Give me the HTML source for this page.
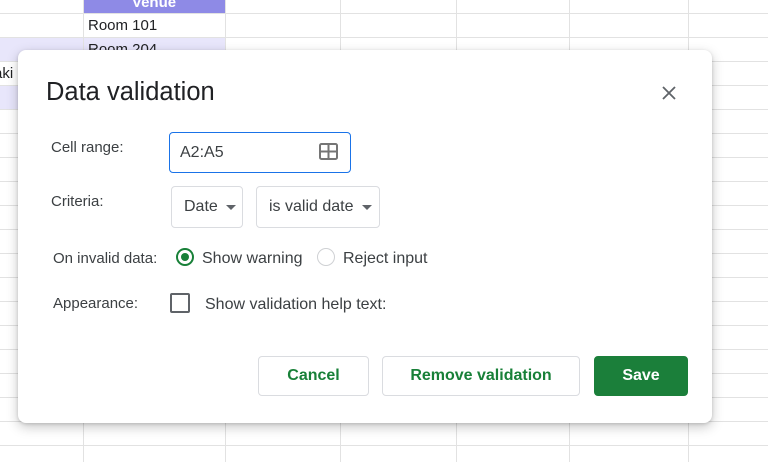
<!DOCTYPE html>
<html><head><style>
body{margin:0;width:768px;height:462px;overflow:hidden;position:relative;background:#fff;font-family:"Liberation Sans",Arial,sans-serif;}
.h{position:absolute;left:0;width:768px;height:1px;background:#e2e2e2}
.v{position:absolute;top:0;height:462px;width:1px;background:#e2e2e2}
.dlg{position:absolute;left:18px;top:50px;width:694px;height:373px;background:#fff;border-radius:8px;box-shadow:0 4px 12px rgba(0,0,0,.22),0 1px 3px rgba(0,0,0,.15);}
.t{position:absolute;color:#3c4043;font-size:15px}
.btn{position:absolute;top:306px;height:40px;border:1px solid #dadce0;border-radius:4px;box-sizing:border-box;color:#188038;font-size:16px;font-weight:bold;display:flex;align-items:center;justify-content:center}
.sel{position:absolute;border:1px solid #dadce0;border-radius:4px;height:42px;box-sizing:border-box;font-size:16px;color:#3c4043;display:flex;align-items:center;padding-left:12px}
.caret{width:0;height:0;border-left:5px solid transparent;border-right:5px solid transparent;border-top:5px solid #5f6368;margin-left:8px}
</style></head><body>
<div style="position:absolute;left:83px;top:0;width:142px;height:13px;background:#8e8ae6;color:#fff;font-weight:bold;font-size:15px;text-align:center;line-height:6px;overflow:hidden">Venue</div>
<div style="position:absolute;left:0;top:37px;width:225px;height:24px;background:#e8e6fb"></div>
<div style="position:absolute;left:0;top:85px;width:225px;height:24px;background:#e8e6fb"></div>
<div class="h" style="top:13px"></div><div class="h" style="top:37px"></div><div class="h" style="top:61px"></div><div class="h" style="top:85px"></div><div class="h" style="top:109px"></div><div class="h" style="top:133px"></div><div class="h" style="top:157px"></div><div class="h" style="top:181px"></div><div class="h" style="top:205px"></div><div class="h" style="top:229px"></div><div class="h" style="top:253px"></div><div class="h" style="top:277px"></div><div class="h" style="top:301px"></div><div class="h" style="top:325px"></div><div class="h" style="top:349px"></div><div class="h" style="top:373px"></div><div class="h" style="top:397px"></div><div class="h" style="top:421px"></div><div class="h" style="top:445px"></div>
<div class="v" style="left:83px"></div><div class="v" style="left:225px"></div><div class="v" style="left:340px"></div><div class="v" style="left:456px"></div><div class="v" style="left:569px"></div><div class="v" style="left:688px"></div>
<div style="position:absolute;left:88px;top:17px;font-size:15px;color:#202124">Room 101</div>
<div style="position:absolute;left:88px;top:41px;font-size:15px;color:#202124">Room 204</div>
<div style="position:absolute;left:-6px;top:65px;font-size:15px;color:#202124">aki</div>
<div class="dlg">
<div class="t" style="left:28px;top:28px;font-size:25.5px;color:#202124">Data validation</div>
<svg style="position:absolute;left:644px;top:36px" width="14" height="14" viewBox="0 0 14 14"><path d="M1 1L13 13M13 1L1 13" stroke="#5f6368" stroke-width="1.8"/></svg>
<div class="t" style="left:33px;top:89px">Cell range:</div>
<div style="position:absolute;left:151px;top:82px;width:182px;height:41px;border:1.5px solid #1a73e8;border-radius:4px;box-sizing:border-box"></div>
<div class="t" style="left:162px;top:94px;font-size:16px">A2:A5</div>
<svg style="position:absolute;left:301px;top:93px" width="19" height="17" viewBox="0 0 19 17"><rect x="1" y="1" width="17" height="15" rx="1.5" fill="none" stroke="#757575" stroke-width="2"/><path d="M9.5 1v15M1 8.5h17" stroke="#757575" stroke-width="2"/></svg>
<div class="t" style="left:33px;top:143px">Criteria:</div>
<div class="sel" style="left:153px;top:136px;width:72px">Date<span class="caret"></span></div>
<div class="sel" style="left:238px;top:136px;width:124px">is valid date<span class="caret"></span></div>
<div class="t" style="left:35px;top:200px">On invalid data:</div>
<div style="position:absolute;left:158px;top:198px;width:18px;height:18px;border:2px solid #188038;border-radius:50%;box-sizing:border-box"><div style="position:absolute;left:3px;top:3px;width:8px;height:8px;border-radius:50%;background:#188038"></div></div>
<div class="t" style="left:184px;top:200px;font-size:16px">Show warning</div>
<div style="position:absolute;left:299px;top:198px;width:18px;height:18px;border:1.5px solid #cfd1d4;border-radius:50%;box-sizing:border-box"></div>
<div class="t" style="left:325px;top:200px;font-size:16px">Reject input</div>
<div class="t" style="left:35px;top:245px">Appearance:</div>
<div style="position:absolute;left:152px;top:243px;width:20px;height:20px;border:2px solid #5f6368;border-radius:2px;box-sizing:border-box"></div>
<div class="t" style="left:187px;top:246px;font-size:16px">Show validation help text:</div>
<div class="btn" style="left:240px;width:111px">Cancel</div>
<div class="btn" style="left:364px;width:198px">Remove validation</div>
<div class="btn" style="left:576px;width:94px;background:#1b7f3a;border-color:#1b7f3a;color:#fff">Save</div>
</div>
</body></html>
